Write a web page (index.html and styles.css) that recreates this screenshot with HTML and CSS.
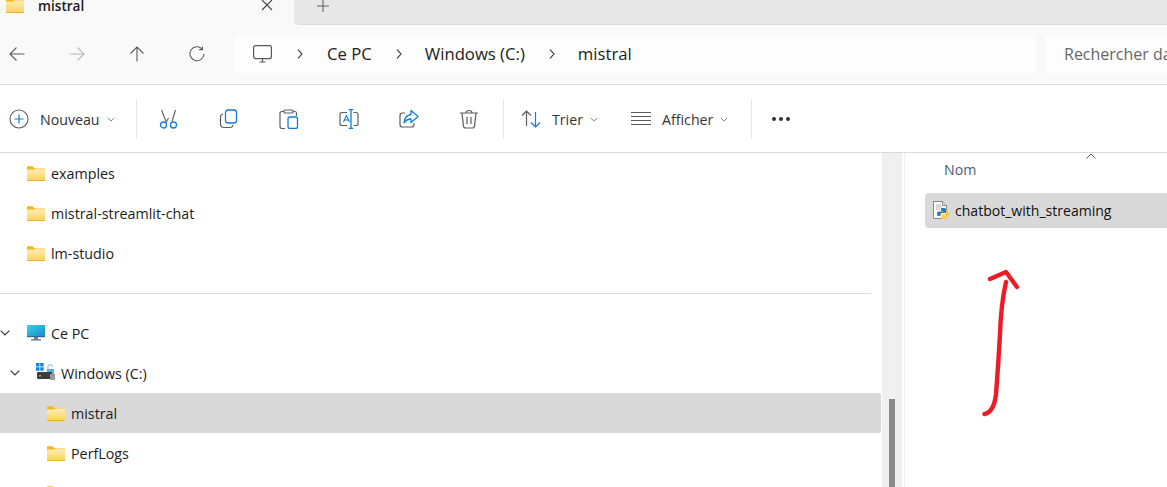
FILE: index.html
```html
<!DOCTYPE html>
<html lang="fr">
<head>
<meta charset="utf-8">
<title>mistral</title>
<link rel="stylesheet" href="styles.css">
</head>
<body>
<svg class="defs" width="0" height="0" aria-hidden="true">
  <defs>
    <linearGradient id="fold" x1="0" y1="0" x2="0" y2="1"><stop offset="0" stop-color="#ffedb4"/><stop offset="1" stop-color="#fbd25f"/></linearGradient>
    <linearGradient id="scr" x1="0" y1="0" x2="1" y2="1"><stop offset="0" stop-color="#35d6e6"/><stop offset="1" stop-color="#1a86c8"/></linearGradient>
    <symbol id="folder" viewBox="0 0 18 15">
      <path d="M0 1.2q0-1 1-1h4.6l2 2H17q1 0 1 1V5H0z" fill="#f6b71b"/>
      <path d="M0 3.6h7.4l1.4-1H18V14q0 1-1 1H1q-1 0-1-1z" fill="url(#fold)"/>
      <path d="M0 14h18v.2q0 .8-1 .8H1q-1 0-1-.8z" fill="#eeae2b"/>
    </symbol>
    <symbol id="chev" viewBox="0 0 10 6"><path d="M1 1l4 4 4-4" fill="none" stroke="#666" stroke-width="1"/></symbol>
  </defs>
</svg>

<header class="tabstrip">
  <div class="tab">
    <div class="tab-inner">
      <svg class="ico-folder tab-folder"><use href="#folder"/></svg>
      <span class="tab-title">mistral</span>
      <svg class="tab-close" viewBox="0 0 12 12"><path d="M1 1l10 10M11 1L1 11" stroke="#444" stroke-width="1.1"/></svg>
    </div>
  </div>
  <div class="tab-rest">
    <svg class="tab-plus" viewBox="0 0 12 12"><path d="M6 0v12M0 6h12" stroke="#666" stroke-width="1.1"/></svg>
  </div>
</header>

<nav class="navbar">
  <div class="nav-btns">
    <button class="nav-btn"><svg viewBox="0 0 16 16"><path d="M15.500 8H1M7.500 1.500L1 8l6.500 6.500" fill="none" stroke="#5c5c5c" stroke-width="1.100"/></svg></button>
    <button class="nav-btn"><svg viewBox="0 0 16 16"><path d="M.5 8H15M8.500 1.500L15 8l-6.500 6.500" fill="none" stroke="#b9b9b9" stroke-width="1.100"/></svg></button>
    <button class="nav-btn"><svg viewBox="0 0 16 16"><path d="M8 15.500V1M1.500 7.500L8 1l6.500 6.500" fill="none" stroke="#5c5c5c" stroke-width="1.100"/></svg></button>
    <button class="nav-btn"><svg viewBox="0 0 16 16"><path d="M13 2.800A7 7 0 1 0 15 8" fill="none" stroke="#5c5c5c" stroke-width="1.100"/><path d="M13.500.6v3h-3.400" fill="none" stroke="#5c5c5c" stroke-width="1.100"/></svg></button>
  </div>
  <div class="address">
    <svg class="pc" viewBox="0 0 19 18"><rect x=".6" y=".6" width="17.800" height="13" rx="2" fill="none" stroke="#5a5a5a" stroke-width="1.200"/><path d="M6.500 17h6M9.500 14v3" stroke="#5a5a5a" stroke-width="1.200"/></svg>
    <svg class="crumb-sep" viewBox="0 0 6 10"><path d="M1 .7L5 5 1 9.300" fill="none" stroke="#333" stroke-width="1.100"/></svg>
    <span class="crumb">Ce PC</span>
    <svg class="crumb-sep" viewBox="0 0 6 10"><path d="M1 .7L5 5 1 9.300" fill="none" stroke="#333" stroke-width="1.100"/></svg>
    <span class="crumb">Windows (C:)</span>
    <svg class="crumb-sep" viewBox="0 0 6 10"><path d="M1 .7L5 5 1 9.300" fill="none" stroke="#333" stroke-width="1.100"/></svg>
    <span class="crumb">mistral</span>
  </div>
  <div class="search">Rechercher dans : mistral</div>
</nav>

<section class="toolbar">
  <button class="tool tool-new">
    <svg class="i20" viewBox="0 0 20 20"><circle cx="10" cy="10" r="9" fill="none" stroke="#5c5c5c" stroke-width="1.100"/><path d="M10 5.500v9M5.500 10h9" stroke="#0f7ddb" stroke-width="1.200"/></svg>
    <span>Nouveau</span>
    <svg class="chev"><use href="#chev"/></svg>
  </button>
  <i class="sep"></i>
  <button class="icon-btn"><svg class="i20" viewBox="0 0 20 20"><path d="M7 12.500L2.500 1M13 12.500L16.500 1" fill="none" stroke="#5c5c5c" stroke-width="1.100"/><path d="M7 13.500L9.500 9" stroke="#5c5c5c" stroke-width="1.100"/><circle cx="4.500" cy="16" r="3" fill="none" stroke="#0f7ddb" stroke-width="1.300"/><circle cx="14.500" cy="16" r="3" fill="none" stroke="#0f7ddb" stroke-width="1.300"/></svg></button>
  <button class="icon-btn"><svg class="i20" viewBox="0 0 20 20"><rect x="6.500" y="1" width="11" height="13" rx="2.500" fill="none" stroke="#0f7ddb" stroke-width="1.300"/><path d="M4 5Q1.500 5.500 1.500 8v7q0 3.500 3.500 3.500h6q2.500 0 3-2.500" fill="none" stroke="#5c5c5c" stroke-width="1.200"/></svg></button>
  <button class="icon-btn"><svg class="i20" viewBox="0 0 20 20"><path d="M5 2.500H3Q1 2.500 1 4.500v13q0 2 2 2h3M14 2.500h2q1.500 0 1.500 2V7" fill="none" stroke="#5c5c5c" stroke-width="1.200"/><rect x="5" y="1" width="9" height="3" rx="1" fill="none" stroke="#5c5c5c" stroke-width="1.100"/><rect x="9" y="8" width="9.500" height="11.500" rx="2" fill="none" stroke="#0f7ddb" stroke-width="1.300"/></svg></button>
  <button class="icon-btn"><svg class="i20" viewBox="0 0 20 20"><path d="M8 3.500H3Q1 3.500 1 5.500v9q0 2 2 2h5M14.500 3.500h2.500q2 0 2 2v9q0 2-2 2h-2.500" fill="none" stroke="#5c5c5c" stroke-width="1.200"/><path d="M4.500 13L7.500 6.500 10.500 13M5.500 11h4" fill="none" stroke="#0f7ddb" stroke-width="1.100"/><path d="M12 .7v18.600M9.800.7h4.400M9.800 19.300h4.400" fill="none" stroke="#0f7ddb" stroke-width="1.300"/></svg></button>
  <button class="icon-btn"><svg class="i20" viewBox="0 0 20 20"><path d="M6 4H3.500Q1 4 1 6.500v9Q1 18 3.500 18h9q2.500 0 2.500-2.500V14" fill="none" stroke="#5c5c5c" stroke-width="1.200"/><path d="M12 1.500l7 6-7 6V10Q7.500 10 5 14q.5-7.500 7-8.500z" fill="none" stroke="#0f7ddb" stroke-width="1.300" stroke-linejoin="round"/></svg></button>
  <button class="icon-btn"><svg class="i20" viewBox="0 0 20 20"><path d="M1 4h18M7 4q0-2.500 3-2.500T13 4M3 4l1.500 13.500Q5 19 6.500 19h7q1.500 0 2-1.500L17 4M8 8v7M12 8v7" fill="none" stroke="#5c5c5c" stroke-width="1.200"/></svg></button>
  <i class="sep sep-sort"></i>
  <button class="tool tool-sort">
    <svg class="i20" viewBox="0 0 20 20"><path d="M5.500 17V2M1 6.500L5.500 2 10 6.500" fill="none" stroke="#5c5c5c" stroke-width="1.200"/><path d="M14.500 3v15M10 13.500l4.500 4.500 4.500-4.500" fill="none" stroke="#0f7ddb" stroke-width="1.200"/></svg>
    <span>Trier</span>
    <svg class="chev"><use href="#chev"/></svg>
  </button>
  <button class="tool tool-view">
    <svg class="i20" viewBox="0 0 20 20"><path d="M0 3.500h20M0 7.500h20M0 11.500h20M0 15.500h20" stroke="#5c5c5c" stroke-width="1.100"/></svg>
    <span>Afficher</span>
    <svg class="chev"><use href="#chev"/></svg>
  </button>
  <i class="sep sep-more"></i>
  <button class="more"><b></b><b></b><b></b></button>
</section>

<main class="main">
  <aside class="tree">
    <div class="row lvl1"><svg class="ico-folder"><use href="#folder"/></svg><span>examples</span></div>
    <div class="row lvl1"><svg class="ico-folder"><use href="#folder"/></svg><span>mistral-streamlit-chat</span></div>
    <div class="row lvl1"><svg class="ico-folder"><use href="#folder"/></svg><span>lm-studio</span></div>
    <div class="tree-sep"></div>
    <div class="row lvl0">
      <svg class="twisty" viewBox="0 0 10 6"><path d="M.7.7L5 5 9.300.7" fill="none" stroke="#333" stroke-width="1.200"/></svg>
      <svg class="ico-pc" viewBox="0 0 18 16"><rect width="18" height="12" rx=".5" fill="url(#scr)"/><rect x="0" y="11" width="18" height="1.200" fill="#2a6a96"/><rect x="7" y="12" width="4" height="2.500" fill="#6b7d8a"/><rect x="4" y="14.300" width="10" height="1.200" fill="#59666f"/></svg>
      <span>Ce PC</span>
    </div>
    <div class="row lvl-drive">
      <svg class="twisty" viewBox="0 0 10 6"><path d="M.7.7L5 5 9.300.7" fill="none" stroke="#333" stroke-width="1.200"/></svg>
      <svg class="ico-drive" viewBox="0 0 20 18"><path d="M0 0h3.500v3.500H0zM4.200 0h3.500v3.500H4.200zM0 4.200h3.500v3.500H0zM4.200 4.200h3.500v3.500H4.200z" fill="#1686d9"/><path d="M12 6V4q0-2.500 2-2.500T16 4" fill="none" stroke="#a8c4d8" stroke-width="1.200"/><rect x="11" y="6" width="7" height="6" fill="#5fa8e0"/><rect x="1" y="9" width="15" height="7" rx="1" fill="#3e3e3e"/><rect x="3" y="12" width="2" height="1.500" fill="#4cd964"/><rect x="14" y="11" width="5" height="6" fill="#9a9a9a"/></svg>
      <span>Windows (C:)</span>
    </div>
    <div class="row lvl2 selected"><svg class="ico-folder"><use href="#folder"/></svg><span>mistral</span></div>
    <div class="row lvl2"><svg class="ico-folder"><use href="#folder"/></svg><span>PerfLogs</span></div>
    <div class="row lvl2"><svg class="ico-folder"><use href="#folder"/></svg><span>Programmes</span></div>
  </aside>
  <div class="scrollbar"><div class="thumb"></div></div>
  <section class="files">
    <div class="col-head">
      <span class="col-name">Nom</span>
      <svg class="sort-caret" viewBox="0 0 10 6"><path d="M.5 5.500L5 1l4.500 4.500" fill="none" stroke="#666" stroke-width="1"/></svg>
    </div>
    <div class="file-row">
      <svg class="ico-py" viewBox="0 0 18 19">
        <path d="M.5.500h9l4 4v13H.5z" fill="#fafafa" stroke="#8a8a8a"/>
        <path d="M9.500.5v4h4" fill="#ddd" stroke="#8a8a8a"/>
        <path d="M3 4h5M3 6h6M3 8h4" stroke="#b5b5b5"/>
        <path d="M8 7h3.500q1.500 0 1.500 1.500V12H9q-1.500 0-1.500 1.500V15H5.500Q4 15 4 13.500V12q0-1.500 1.500-1.500H10V10H8z" fill="#3a76a8"/>
        <path d="M13 10h2.500Q17 10 17 11.500v1.500q0 1.500-1.500 1.500H11v.5h3v1.500q0 1.500-1.500 1.500H10q-1.500 0-1.500-1.500V14q0-1 1.500-1h3.500z" fill="#fbd13b"/>
      </svg>
      <span>chatbot_with_streaming</span>
    </div>
    <svg class="arrow" viewBox="0 0 50 150" aria-hidden="true">
      <path d="M2.500 145 Q12 143 14 125 Q16 100 18 65 Q19 35 24 13" fill="none" stroke="#ed1c24" stroke-width="4.400" stroke-linecap="round"/>
      <path d="M8 10 L24 3 L35 18" fill="none" stroke="#ed1c24" stroke-width="4.400" stroke-linecap="round" stroke-linejoin="round"/>
    </svg>
  </section>
</main>
</body>
</html>
```

FILE: styles.css
```css
* { box-sizing: border-box; }
html, body { margin: 0; height: 100%; }
body {
  width: 1167px;
  height: 487px;
  overflow: hidden;
  background: #fff;
  color: #1c1c1c;
  font-family: "Open Sans", "Noto Sans", "Liberation Sans", sans-serif;
  font-size: 14.2px;
  display: flex;
  flex-direction: column;
}
button {
  border: 0;
  padding: 0;
  margin: 0;
  background: none;
  font: inherit;
  color: inherit;
  display: flex;
  align-items: center;
}
svg { display: block; flex: none; }
.defs { position: absolute; }

/* Tabs */
.tabstrip { height: 25px; flex: none; display: flex; background: #f9f9f9; overflow: hidden; }
.tab { width: 294px; flex: none; }
.tab-inner { height: 40px; margin-top: -15px; display: flex; align-items: center; padding-left: 6px; position: relative; }
.ico-folder { width: 18px; height: 15px; }
.tab-title { margin-left: 14px; font-weight: 600; font-size: 13.6px; }
.tab-close { width: 12px; height: 12px; margin-left: auto; margin-right: 21px; }
.tab-rest {
  flex: 1;
  background: #e8e8e8;
  border-bottom: 1px solid #dcdcdc;
  border-bottom-left-radius: 5px;
  padding: 0 0 0 23px;
  display: flex;
  align-items: center;
}
.tab-plus { width: 12px; height: 12px; margin-top: -13px; }

/* Navigation */
.navbar {
  height: 60px;
  flex: none;
  background: #f9f9f9;
  border-bottom: 1px solid #d6d6d6;
  display: flex;
  align-items: center;
  padding-bottom: 2px;
}
.nav-btns { display: flex; width: 235px; flex: none; padding-left: 9px; gap: 44px; }
.nav-btn svg { width: 16px; height: 16px; }
.address {
  width: 801px;
  height: 40px;
  flex: none;
  background: #fdfdfd;
  border-radius: 5px;
  display: flex;
  align-items: center;
  padding-left: 18px;
  font-size: 16.7px;
}
.pc { width: 19px; height: 18px; }
.crumb-sep { width: 6px; height: 10px; margin: 0 23px 0 0; }
.pc + .crumb-sep { margin-left: 25px; margin-right: 24px; }
.crumb { margin-right: 24px; }
.search {
  margin-left: 9px;
  flex: 1;
  height: 40px;
  background: #fdfdfd;
  border-radius: 5px 0 0 5px;
  display: flex;
  align-items: center;
  padding-left: 19px;
  color: #666;
  font-size: 16px;
  white-space: nowrap;
  overflow: hidden;
}

/* Toolbar */
.toolbar {
  height: 68px;
  flex: none;
  border-bottom: 1px solid #d9d9d9;
  display: flex;
  align-items: center;
  padding-top: 1px;
}
.i20 { width: 20px; height: 20px; }
.tool { color: #333; }
.tool span { margin-left: 11px; }
.chev { width: 8px; height: 5px; margin-left: 7px; }
.tool-new { margin-left: 9px; width: 127px; }
.sep { width: 1px; height: 40px; background: #e6e6e6; flex: none; margin-right: 2px; }
.icon-btn { width: 60px; justify-content: center; }
.sep-sort { margin-left: 4px; margin-right: 17px; }
.tool-sort { width: 110px; }
.tool-view { width: 120px; }
.sep-more { margin-right: 20px; }
.more { gap: 3px; }
.more b { width: 4px; height: 4px; border-radius: 50%; background: #333; }

/* Main */
.main { flex: 1; display: flex; min-height: 0; }
.tree { width: 882px; flex: none; overflow: hidden; padding-right: 1px; }
.row { height: 40px; display: flex; align-items: center; color: #1c1c1c; white-space: nowrap; font-size: 14.3px; }
.lvl1 { padding-left: 27px; }
.lvl1 span, .lvl0 span { margin-left: 6px; }
.lvl2 { padding-left: 47px; }
.lvl2 span { margin-left: 6px; }
.lvl0 { padding-left: 0; }
.twisty { width: 10px; height: 6px; }
.ico-pc { width: 18px; height: 16px; margin-left: 17px; }
.lvl-drive { padding-left: 10px; }
.ico-drive { width: 20px; height: 18px; margin-left: 16px; margin-right: 5px; margin-top: -3px; }
.selected { background: #d9d9d9; border-radius: 0 2px 2px 0; }
.tree-sep { height: 40px; display: flex; align-items: center; padding-right: 10px; }
.tree-sep::before { content: ""; flex: 1; height: 1px; background: #dcdcdc; }
.scrollbar { width: 20px; flex: none; background: #f0f0f0; display: flex; justify-content: center; align-items: flex-end; }
.thumb { width: 6px; height: 88px; background: #8a8a8a; margin-right: 1px; }
.files { flex: 1; position: relative; margin-left: 2px; border-left: 1px solid #f0f0f0; padding-left: 20px; }
.col-head { height: 40px; display: flex; align-items: center; padding-left: 19px; padding-bottom: 7px; position: relative; }
.col-name { color: #4c607a; }
.sort-caret { position: absolute; left: 161px; top: 0; width: 10px; height: 6px; }
.file-row {
  height: 35px;
  background: #d9d9d9;
  border-radius: 4px 0 0 4px;
  display: flex;
  align-items: center;
  padding-left: 8px;
  color: #111;
  font-size: 14.05px;
}
.ico-py { width: 18px; height: 19px; }
.file-row span { margin-left: 4px; }
.arrow { position: absolute; left: 77px; top: 116px; width: 50px; height: 150px; }
```
